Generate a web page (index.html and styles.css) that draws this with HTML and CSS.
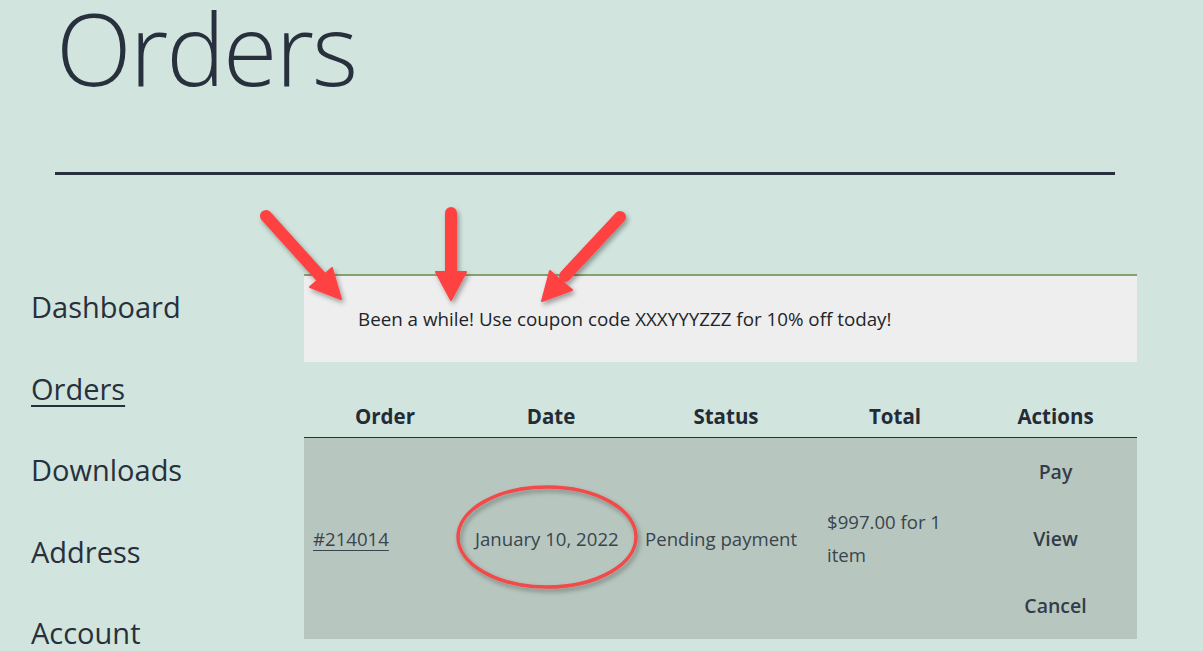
FILE: index.html
```html
<!DOCTYPE html>
<html lang="en">
<head>
<meta charset="utf-8">
<title>Orders</title>
<link rel="stylesheet" href="styles.css">
</head>
<body>
<div class="page">
  <header class="page-header">
    <h1 class="page-title">Orders</h1>
  </header>
  <div class="account">
    <nav class="account-nav">
      <ul>
        <li><a href="#">Dashboard</a></li>
        <li><a href="#" class="current">Orders</a></li>
        <li><a href="#">Downloads</a></li>
        <li><a href="#">Address</a></li>
        <li><a href="#">Account</a></li>
      </ul>
    </nav>
    <main class="account-content">
      <div class="notice">Been a while! Use coupon code XXXYYYZZZ for 10% off today!</div>
      <table class="orders">
        <thead>
          <tr>
            <th class="c-order">Order</th>
            <th class="c-date">Date</th>
            <th class="c-status">Status</th>
            <th class="c-total">Total</th>
            <th class="c-actions">Actions</th>
          </tr>
        </thead>
        <tbody>
          <tr>
            <td class="c-order"><a href="#" class="order-link">#214014</a></td>
            <td class="c-date">January 10, 2022</td>
            <td class="c-status">Pending payment</td>
            <td class="c-total"><span class="total-text">$997.00 for 1 item</span></td>
            <td class="c-actions">
              <a href="#" class="action">Pay</a>
              <a href="#" class="action">View</a>
              <a href="#" class="action">Cancel</a>
            </td>
          </tr>
        </tbody>
      </table>
    </main>
  </div>
  <svg class="annotations" width="1203" height="651" viewBox="0 0 1203 651" aria-hidden="true">
    <defs>
      <filter id="shadow" x="-20%" y="-20%" width="140%" height="140%">
        <feDropShadow dx="2" dy="3" stdDeviation="2.5" flood-color="#000" flood-opacity="0.35"/>
      </filter>
    </defs>
    <g filter="url(#shadow)" fill="#fe4343" stroke="#fe4343">
      <line x1="266" y1="216" x2="322" y2="278" stroke-width="12" stroke-linecap="round"/>
      <polygon points="310,287 332,268 341,299" stroke-width="2" stroke-linejoin="round"/>
      <line x1="451" y1="213" x2="451" y2="276" stroke-width="12" stroke-linecap="round"/>
      <polygon points="436,272 466,272 451,300" stroke-width="2" stroke-linejoin="round"/>
      <line x1="620" y1="217" x2="565" y2="276" stroke-width="12" stroke-linecap="round"/>
      <polygon points="550,271 572,290 542,301" stroke-width="2" stroke-linejoin="round"/>
    </g>
    <ellipse cx="547" cy="537" rx="89" ry="50" fill="none" stroke="#f24a4a" stroke-width="3.5" filter="url(#shadow)"/>
  </svg>
</div>
</body>
</html>
```

FILE: styles.css
```css
* { box-sizing: border-box; }

html, body {
  margin: 0;
  padding: 0;
}

body {
  background: #d1e4de;
  color: #2a323e;
  font-family: "Open Sans", "Noto Sans", "Liberation Sans", sans-serif;
  width: 1203px;
  height: 651px;
  overflow: hidden;
}

.page {
  position: relative;
  width: 1203px;
  height: 651px;
}

.page-header {
  margin-left: 55px;
  width: 1060px;
  height: 175px;
  padding-top: 0;
  border-bottom: 3px solid #27303c;
}

.page-title {
  margin: 0;
  padding-left: 1px;
  font-size: 99px;
  font-weight: 300;
  line-height: 96px;
  letter-spacing: -2px;
  color: #27303c;
}

.account {
  display: flex;
  padding-left: 31px;
  padding-top: 91px;
}

.account-nav {
  width: 273px;
  flex: none;
}

.account-nav ul {
  list-style: none;
  margin: 0;
  padding: 0;
}

.account-nav li {
  font-size: 29px;
  line-height: 81.5px;
}

.account-nav a {
  color: #27303c;
  text-decoration: none;
}

.account-nav a.current {
  text-decoration: underline;
  text-decoration-thickness: 2px;
  text-underline-offset: 5px;
}

.account-content {
  width: 833px;
  flex: none;
  padding-top: 8px;
}

.notice {
  background: #eeeeee;
  border-top: 2px solid #87a06f;
  height: 88px;
  padding: 31px 0 0 54px;
  font-size: 18.8px;
  line-height: 24px;
  color: #1e242c;
}

.orders {
  width: 833px;
  margin-top: 35px;
  border-collapse: collapse;
  table-layout: fixed;
}

.orders th {
  font-size: 20.5px;
  font-weight: 700;
  color: #232b36;
  height: 40px;
  padding: 0 0 1px;
  border-bottom: 1px solid #27303c;
  text-align: center;
  vertical-align: middle;
}

.orders td {
  background: #b7c7bf;
  height: 202px;
  font-size: 18.6px;
  color: #3a444e;
  vertical-align: middle;
  padding: 0 0 0 9px;
  text-align: left;
}

.c-order { width: 162px; }
.c-date { width: 170px; }
.c-status { width: 180px; }
.c-total { width: 158px; }
.c-actions { width: 163px; }

.orders td.c-total { padding-left: 11px; }

.total-text {
  display: block;
  max-width: 130px;
  line-height: 33px;
}

.order-link {
  color: #3a444e;
  text-decoration: underline;
  text-decoration-thickness: 1px;
  text-underline-offset: 4px;
}

.orders td.c-actions {
  text-align: center;
  padding: 0;
}

.action {
  display: block;
  line-height: 67px;
  font-size: 19.5px;
  font-weight: 600;
  color: #333c48;
  text-decoration: none;
}

.annotations {
  position: absolute;
  left: 0;
  top: 0;
  pointer-events: none;
}
```
